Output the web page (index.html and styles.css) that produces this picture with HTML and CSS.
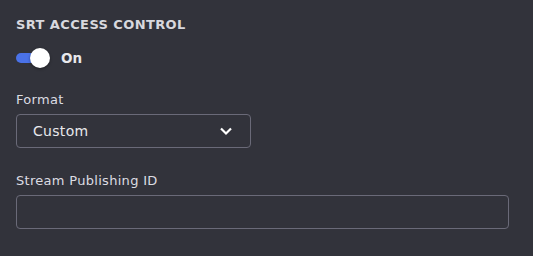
FILE: index.html
```html
<!DOCTYPE html>
<html lang="en">
<head>
    <meta charset="UTF-8">
    <title>SRT Access Control</title>
    <link rel="stylesheet" href="styles.css">
</head>
<body>
    <div class="panel">
        <h2 class="title">SRT ACCESS CONTROL</h2>

        <div class="toggle-row">
            <span class="switch"><span class="knob"></span></span>
            <span class="toggle-label">On</span>
        </div>

        <label class="field-label">Format</label>
        <div class="select">
            <span>Custom</span>
            <svg width="14" height="10" viewBox="0 0 14 10">
                <path d="M2 2.5 L7 7.5 L12 2.5" fill="none" stroke="#fff" stroke-width="2.2"/>
            </svg>
        </div>

        <label class="field-label second">Stream Publishing ID</label>
        <div class="input"></div>
    </div>
</body>
</html>
```

FILE: styles.css
```css
body {
    margin: 0;
    background-color: #32333b;
    font-family: "DejaVu Sans", sans-serif;
    color: #e4e4e8;
}

.panel {
    padding: 16px 25px 0 16px;
}

.title {
    margin: 0;
    font-size: 13px;
    font-weight: bold;
    letter-spacing: 0.4px;
    color: #d8d8de;
    line-height: 18px;
}

.toggle-row {
    display: flex;
    align-items: center;
    margin-top: 14px;
    height: 20px;
}

.switch {
    position: relative;
    width: 30px;
    height: 10px;
    border-radius: 5px;
    background-color: #4a72e8;
}

.knob {
    position: absolute;
    right: -4px;
    top: -5px;
    width: 20px;
    height: 20px;
    border-radius: 50%;
    background: #fff;
    box-shadow: 0 1px 3px rgba(0, 0, 0, 0.4);
}

.toggle-label {
    margin-left: 15px;
    font-size: 13.5px;
    font-weight: bold;
    color: #e8e8ec;
}

.field-label {
    display: block;
    margin-top: 23px;
    font-size: 13px;
    line-height: 18px;
    letter-spacing: 0.3px;
    color: #dcdce2;
}

.field-label.second {
    margin-top: 24px;
}

.select {
    display: flex;
    align-items: center;
    justify-content: space-between;
    box-sizing: border-box;
    width: 235px;
    height: 34px;
    margin-top: 5px;
    padding: 0 17px 0 16px;
    border: 1px solid #6a6a78;
    border-radius: 4px;
    font-size: 14px;
    letter-spacing: 0.3px;
    color: #e8e8ec;
}

.input {
    box-sizing: border-box;
    width: 493px;
    height: 34px;
    margin-top: 5px;
    border: 1px solid #6a6a78;
    border-radius: 4px;
}
```
